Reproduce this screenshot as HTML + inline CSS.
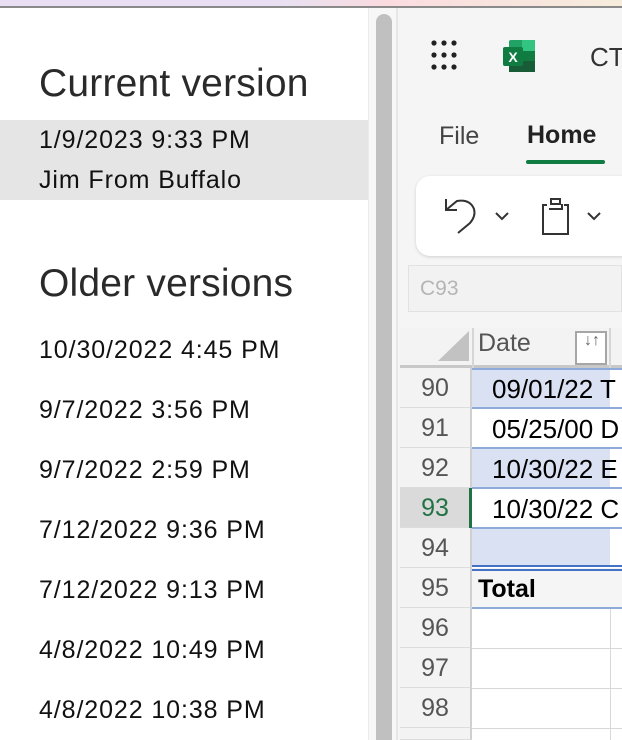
<!DOCTYPE html>
<html><head><style>
*{margin:0;padding:0;box-sizing:border-box}
html,body{width:622px;height:740px;overflow:hidden}
body{background:#fff;font-family:"Liberation Sans",sans-serif;position:relative;color:#111}
.a{position:absolute;white-space:nowrap}
.h{font-size:39px;font-weight:300;color:#2a2a2a;left:39px;letter-spacing:0.2px}
.t{font-size:25px;left:39px;color:#111;letter-spacing:0.9px}
.rh{position:absolute;left:400px;width:72px;height:40px;background:#f3f3f3;border-bottom:1px solid #dcdcdc;border-right:2px solid #d0d0d0;text-align:center;font-size:25px;color:#555;line-height:40px}
.cell{position:absolute;left:472px;width:150px;height:40px;font-size:26px;line-height:40px;color:#000;overflow:hidden}
</style></head><body>
<div class="a" style="left:0;top:0;width:622px;height:6px;background:linear-gradient(90deg,#e8e0f2 0%,#e8e0f2 45%,#fadce0 62%,#f6ecdc 100%)"></div>
<div class="a" style="left:0;top:6px;width:622px;height:2px;background:#8a8a8a"></div>

<div class="a h" style="top:62px">Current version</div>
<div class="a" style="left:0;top:120px;width:368px;height:80px;background:#e5e5e5"></div>
<div class="a t" style="top:126px">1/9/2023 9:33 PM</div>
<div class="a t" style="top:166px">Jim From Buffalo</div>
<div class="a h" style="top:262px">Older versions</div>
<div class="a t" style="top:336px">10/30/2022 4:45 PM</div>
<div class="a t" style="top:396px">9/7/2022 3:56 PM</div>
<div class="a t" style="top:456px">9/7/2022 2:59 PM</div>
<div class="a t" style="top:516px">7/12/2022 9:36 PM</div>
<div class="a t" style="top:576px">7/12/2022 9:13 PM</div>
<div class="a t" style="top:636px">4/8/2022 10:49 PM</div>
<div class="a t" style="top:696px">4/8/2022 10:38 PM</div>

<div class="a" style="left:368px;top:8px;width:30px;height:732px;background:#f7f7f7;border-left:1px solid #ececec;border-right:2px solid #e6e6e6"></div>
<div class="a" style="left:376px;top:14px;width:16px;height:726px;background:#c0c0c0;border-radius:8px 8px 0 0"></div>

<div class="a" style="left:398px;top:8px;width:224px;height:732px;background:#f5f5f5"></div>
<svg class="a" style="left:430px;top:40px" width="34" height="32"><g fill="#222"><circle cx="4" cy="3" r="2.6"/><circle cx="14" cy="3" r="2.6"/><circle cx="24" cy="3" r="2.6"/><circle cx="4" cy="15" r="2.6"/><circle cx="14" cy="15" r="2.6"/><circle cx="24" cy="15" r="2.6"/><circle cx="4" cy="27" r="2.6"/><circle cx="14" cy="27" r="2.6"/><circle cx="24" cy="27" r="2.6"/></g></svg>
<svg class="a" style="left:503px;top:40px" width="34" height="33"><rect x="6" y="0" width="26" height="32" rx="2" fill="#21a366"/><rect x="19" y="0" width="13" height="11" fill="#33c481"/><rect x="19" y="11" width="13" height="10" fill="#107c41"/><rect x="6" y="21" width="26" height="11" fill="#185c37"/><rect x="0" y="7" width="20" height="19" rx="2" fill="#107c41"/><text x="10" y="22" font-size="14" font-weight="bold" fill="#fff" text-anchor="middle" font-family="Liberation Sans">X</text></svg>
<div class="a" style="left:590px;top:42px;font-size:26px;color:#333">CT</div>
<div class="a" style="left:439px;top:122px;font-size:25px;color:#444">File</div>
<div class="a" style="left:527px;top:121px;font-size:25px;font-weight:bold;color:#222">Home</div>
<div class="a" style="left:526px;top:160px;width:79px;height:4px;background:#107c41;border-radius:2px"></div>
<div class="a" style="left:416px;top:176px;width:220px;height:80px;background:#fff;border-radius:14px;box-shadow:0 1px 3px rgba(0,0,0,.15)"></div>
<svg class="a" style="left:444px;top:196px" width="180" height="40"><g fill="none" stroke="#333" stroke-width="2"><path d="M2 3 V14 H13 M2 14 L13 5 Q26 3 30 13 Q32 20 26 27 L14 37"/><path d="M52 17 L58 23 L64 17"/><path d="M103 9 H99 V38 H124 V9 H120 M107 8 H116 V3 H107 Z M105 13 H118 V8"/><path d="M144 17 L150 23 L156 17"/></g></svg>
<div class="a" style="left:408px;top:265px;width:214px;height:47px;background:#f2f2f2;border:1px solid #e2e2e2"></div>
<div class="a" style="left:420px;top:277px;font-size:21px;color:#b5b5b5">C93</div>

<div class="a" style="left:400px;top:328px;width:222px;height:40px;background:#f3f3f3;border-bottom:3px solid #c8c8c8"></div>
<svg class="a" style="left:436px;top:331px" width="34" height="32"><path d="M33 0 V30 H2 Z" fill="#c2c2c2"/></svg>
<div class="a" style="left:472px;top:328px;width:2px;height:40px;background:#d6d6d6"></div>
<div class="a" style="left:478px;top:329px;font-size:25px;color:#555">Date</div>
<div class="a" style="left:575px;top:331px;width:32px;height:34px;border:2px solid #a6a6a6;background:#fff"></div>
<div class="a" style="left:584px;top:332px;font-size:16px;color:#666">&#8595;&#8593;</div>
<div class="a" style="left:609px;top:328px;width:2px;height:40px;background:#d6d6d6"></div>

<div class="rh" style="top:368px">90</div>
<div class="rh" style="top:408px">91</div>
<div class="rh" style="top:448px">92</div>
<div class="rh" style="top:488px;background:#dadada;color:#217346">93</div>
<div class="rh" style="top:528px">94</div>
<div class="rh" style="top:568px">95</div>
<div class="rh" style="top:608px">96</div>
<div class="rh" style="top:648px">97</div>
<div class="rh" style="top:688px;height:40px">98</div>
<div class="rh" style="top:728px;height:12px"></div>

<div class="a" style="left:472px;top:368px;width:150px;height:200px;background:#fff"></div>
<div class="a" style="left:472px;top:368px;width:138px;height:40px;background:#d9e1f2"></div>
<div class="a" style="left:472px;top:448px;width:138px;height:40px;background:#d9e1f2"></div>
<div class="a" style="left:472px;top:528px;width:138px;height:38px;background:#d9e1f2"></div>
<div class="a" style="left:472px;top:368px;width:150px;height:2px;background:#8eaadb"></div>
<div class="a" style="left:472px;top:407px;width:150px;height:2px;background:#8eaadb"></div>
<div class="a" style="left:472px;top:447px;width:150px;height:2px;background:#8eaadb"></div>
<div class="a" style="left:472px;top:487px;width:150px;height:2px;background:#8eaadb"></div>
<div class="a" style="left:472px;top:527px;width:150px;height:2px;background:#8eaadb"></div>
<div class="a" style="left:472px;top:565px;width:150px;height:2px;background:#4472c4"></div>
<div class="a" style="left:472px;top:569px;width:150px;height:2px;background:#4472c4"></div>
<div class="a" style="left:472px;top:607px;width:150px;height:2px;background:#8eaadb"></div>
<div class="a" style="left:469px;top:488px;width:3px;height:40px;background:#217346"></div>
<div class="cell" style="top:369px;padding-left:20px">09/01/22 T</div>
<div class="cell" style="top:409px;padding-left:20px">05/25/00 D</div>
<div class="cell" style="top:449px;padding-left:20px">10/30/22 E</div>
<div class="cell" style="top:489px;padding-left:20px">10/30/22 C</div>
<div class="cell" style="top:569px;padding-left:6px;font-weight:bold;font-size:25px">Total</div>

<div class="a" style="left:472px;top:609px;width:150px;height:131px;background:#fff"></div>
<div class="a" style="left:610px;top:609px;width:1px;height:131px;background:#d8d8d8"></div>
<div class="a" style="left:472px;top:648px;width:150px;height:1px;background:#d8d8d8"></div>
<div class="a" style="left:472px;top:688px;width:150px;height:1px;background:#d8d8d8"></div>
<div class="a" style="left:472px;top:728px;width:150px;height:1px;background:#d8d8d8"></div>
</body></html>
